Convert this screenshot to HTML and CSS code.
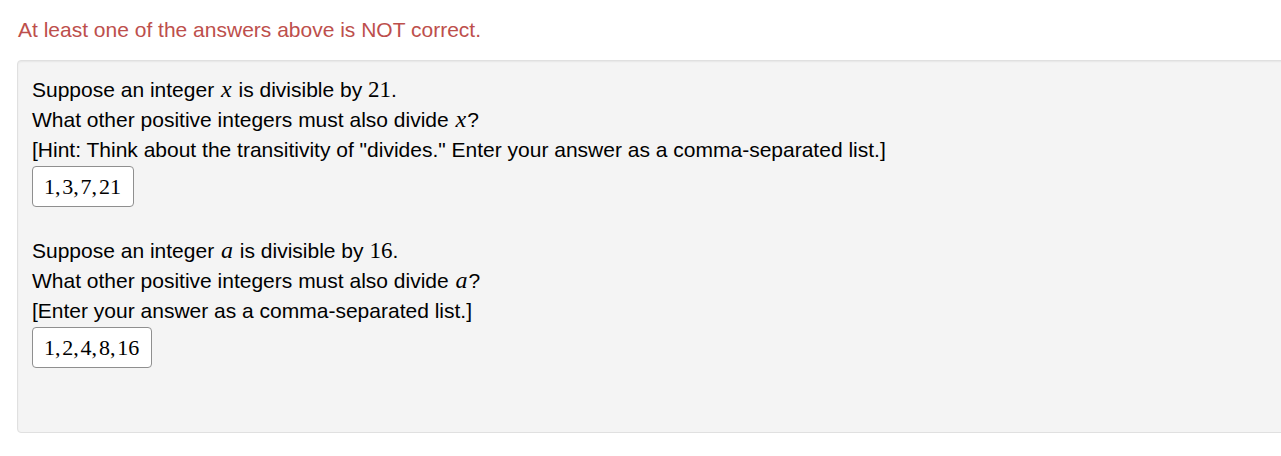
FILE: index.html
```html
<!DOCTYPE html>
<html>
<head>
<meta charset="utf-8">
<link rel="stylesheet" href="styles.css">
</head>
<body>
<div class="page">
  <div class="msg">At least one of the answers above is NOT correct.</div>
  <div class="well">
    <div class="problem">
      <div class="line">Suppose an integer <span class="mi">x</span> is divisible by <span class="mn">21</span>.</div>
      <div class="line">What other positive integers must also divide <span class="mi">x</span>?</div>
      <div class="line">[Hint: Think about the transitivity of "divides." Enter your answer as a comma-separated list.]</div>
      <div class="answer"><span class="an">1</span><span class="ap">,</span><span class="an">3</span><span class="ap">,</span><span class="an">7</span><span class="ap">,</span><span class="an">21</span></div>
    </div>
    <div class="problem second">
      <div class="line">Suppose an integer <span class="mi">a</span> is divisible by <span class="mn">16</span>.</div>
      <div class="line">What other positive integers must also divide <span class="mi">a</span>?</div>
      <div class="line">[Enter your answer as a comma-separated list.]</div>
      <div class="answer"><span class="an">1</span><span class="ap">,</span><span class="an">2</span><span class="ap">,</span><span class="an">4</span><span class="ap">,</span><span class="an">8</span><span class="ap">,</span><span class="an">16</span></div>
    </div>
  </div>
</div>
</body>
</html>
```

FILE: styles.css
```css
html, body {
  margin: 0;
  padding: 0;
  overflow: hidden;
  background: #ffffff;
}
body {
  font-family: "Liberation Sans", Arial, sans-serif;
  font-size: 21px;
  color: #000;
}
.page {
  padding: 15px 0 0 17px;
}
.msg {
  color: #bd4f4c;
  line-height: 30px;
  height: 30px;
  padding-left: 1px;
  margin-bottom: 15px;
  white-space: nowrap;
}
.well {
  width: 1300px;
  box-sizing: border-box;
  background: #f4f4f4;
  border: 1px solid #e0e0e0;
  border-radius: 4px;
  box-shadow: inset 0 1px 2px rgba(0,0,0,0.06);
  padding: 14px 14px 0 14px;
  height: 373px;
}
.line {
  line-height: 30px;
  height: 30px;
  white-space: nowrap;
}
.mi {
  font-family: "Liberation Serif", "Times New Roman", serif;
  font-style: italic;
  font-size: 24px;
  line-height: 1;
  padding: 0 1px 0 1px;
}
.mn {
  font-family: "Liberation Serif", "Times New Roman", serif;
  font-size: 23px;
  line-height: 1;
}
.an {
  font-family: "Liberation Serif", "Times New Roman", serif;
  font-size: 22px;
}
.ap {
  font-family: "Liberation Serif", "Times New Roman", serif;
  font-size: 22px;
  margin-right: 1.8px;
}
.answer {
  display: inline-block;
  vertical-align: top;
  margin-top: 1px;
  padding: 8px 12px 8px 11px;
  height: 23px;
  line-height: 23px;
  border: 1px solid #8f8f8f;
  border-radius: 4px;
  background: #fff;
  white-space: nowrap;
}
.second {
  margin-top: 29px;
}
```
